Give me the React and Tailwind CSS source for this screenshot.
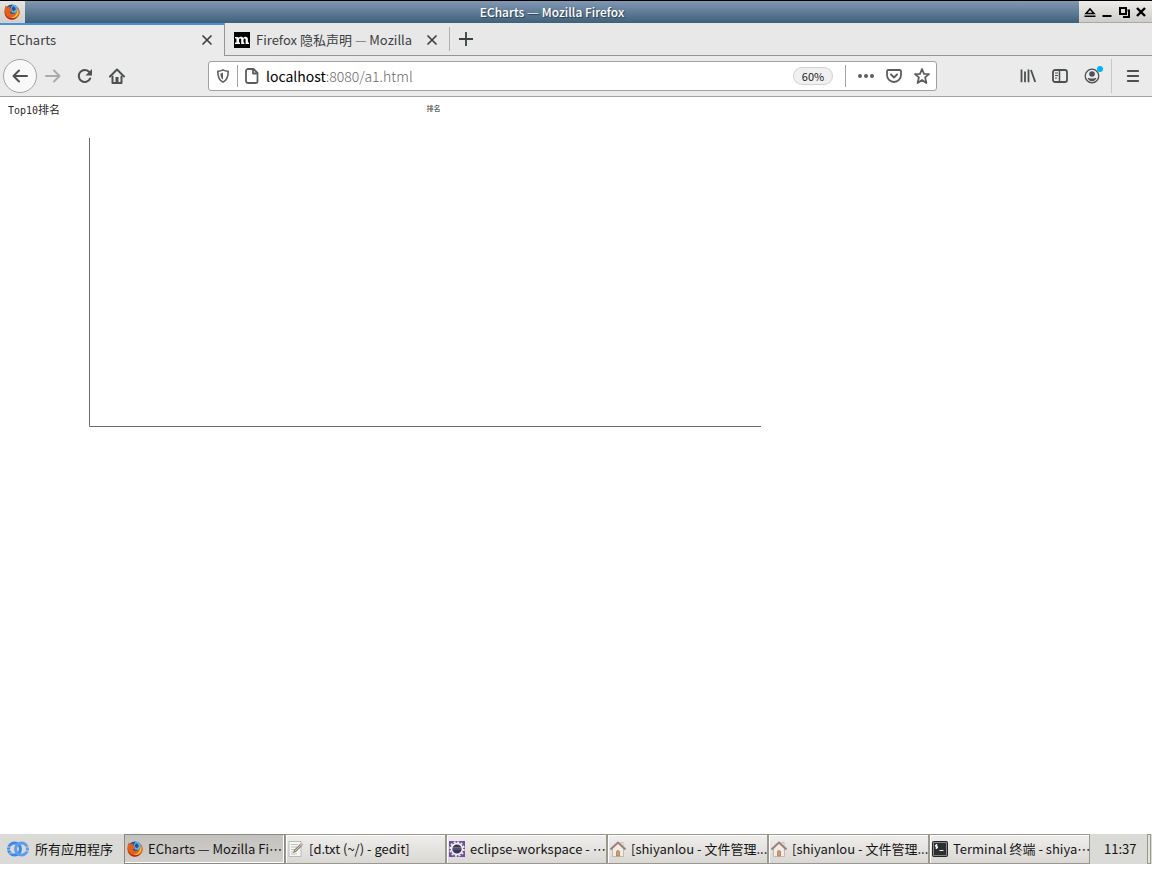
import React from "react";

function FirefoxLogo() {
  return (
    <svg width="16" height="16" viewBox="0 0 16 16" className="shrink-0" aria-hidden="true">
      <circle cx="8" cy="8" r="7.4" fill="#28558f" />
      <path d="M8.500 .8c3.800.2 6 2.600 6 5.700L12 9l-4-.5-2-3z" fill="#5fb4e6" />
      <path d="M9 2.200c1.800.4 2.900 1.800 2.700 3.600L9.600 7.200 7.500 5z" fill="#264f91" />
      <path d="M1.800 1.200 3.300 3.400c1-.6 2-.7 3-.3L5.800 5l2.400 1-.6 1.500-1.900.8c.4 1.700 3.100 2 5 1.100 2.100-1 3-3.100 2.500-6C15 4.500 16 6.700 15.700 9c-.5 3.800-3.700 6.700-7.700 6.700S.8 12.700.4 9C.1 6.200.8 3.300 1.800 1.200z" fill="#e4601b" />
      <path d="M13.600 4.200c1.500 2.300 1.300 5.600-.6 7.700-1.500 1.700-3.900 2.400-6.200 1.800 3.500-.5 6.900-3.400 6.800-9.500z" fill="#f8c440" />
      <path d="M1 8c.6 3.700 3.100 6 7 6.300 2.300.1 4-.6 5.200-1.700-1 1.900-2.900 3-5.200 3C4.100 15.600.8 12.500 1 8z" fill="#b5231c" />
    </svg>
  );
}

function Glyph({ children, size = 16, className = "" }) {
  return (
    <svg width={size} height={size} viewBox="0 0 16 16" fill="none" stroke="currentColor" strokeWidth="2" strokeLinecap="round" strokeLinejoin="round" className={`shrink-0 ${className}`} aria-hidden="true">
      {children}
    </svg>
  );
}

function CloseIcon() {
  return <Glyph><path d="M4 4l8 8M12 4l-8 8" strokeWidth="1.700" /></Glyph>;
}

function TitleBar() {
  return (
    <header className="flex h-[23px] border-t border-black bg-linear-to-b from-[#8298b3] to-[#3f607a]">
      <div className="flex w-[25px] items-center bg-linear-to-b from-[#e6e4e1] to-[#d0cfcb] pl-1">
        <FirefoxLogo />
      </div>
      <h1 className="flex-1 text-center text-[12px] leading-[21px] font-medium text-white [text-shadow:1px_1px_1px_#2c4254]">
        ECharts <span className="font-['DejaVu_Sans',sans-serif] font-normal text-[#d4dce2]">—</span> Mozilla Firefox
      </h1>
      <div className="flex w-[73px] items-center justify-between border-b border-[#aaa9a4] bg-linear-to-b from-[#eeedeb] to-[#cfcdc8] px-[5px] text-black">
        <button aria-label="Shade">
          <svg width="12" height="12" viewBox="0 0 12 12" fill="none" stroke="currentColor" strokeWidth="1.500"><path d="M2 7.500 6 3l4 4.500zM.5 10.200h11" /></svg>
        </button>
        <button aria-label="Minimize">
          <svg width="12" height="12" viewBox="0 0 12 12" fill="none" stroke="currentColor" strokeWidth="2"><path d="M1.500 10h9" /></svg>
        </button>
        <button aria-label="Maximize">
          <svg width="12" height="12" viewBox="0 0 12 12" fill="none" stroke="currentColor" strokeWidth="2"><path d="M2 2h6v6H2zM11 4v7M5 11h7M9.500 4.500H12" /></svg>
        </button>
        <button aria-label="Close">
          <svg width="12" height="12" viewBox="0 0 12 12" fill="none" stroke="currentColor" strokeWidth="2.400"><path d="M2 2l8 8M10 2l-8 8" /></svg>
        </button>
      </div>
    </header>
  );
}

function TabStrip() {
  return (
    <div className="flex h-[33px] bg-[#e8e8e8] text-[13px] text-[#3b4042]" role="tablist">
      <div className="flex w-[224px] items-center bg-[#ebebeb] px-[9px] shadow-[inset_0_2px_0_#4a90d9]">
        <button role="tab" aria-selected="true" className="flex-1 text-left">ECharts</button>
        <button aria-label="Close tab"><CloseIcon /></button>
      </div>
      <div className="flex flex-1 items-center border-b border-l border-[#959595]">
        <div className="flex h-full w-[224px] items-center px-[9px] pt-px">
          <button role="tab" aria-selected="false" className="flex flex-1 items-center gap-[6px] text-left whitespace-nowrap">
            <svg width="16" height="16" viewBox="0 0 16 16" className="shrink-0" aria-hidden="true">
              <path d="M0 0h16v16H0z" fill="#000" />
              <path d="M1 5h3.500v1.200C5.200 5.200 6 4.800 7 4.800c1.100 0 1.800.5 2.100 1.400.7-1 1.500-1.400 2.500-1.400 1.600 0 2.300 1 2.300 2.600v3h1.100V12h-3.400V7.800c0-.8-.3-1.200-.9-1.200-.8 0-1.200.7-1.200 1.600v2.200h.8V12H7.200V7.800c0-.8-.3-1.200-.9-1.200-.9 0-1.300.7-1.300 1.600v2.200h1V12H1v-1.600h1.400V6.600H1z" fill="#fff" />
            </svg>
            <span>Firefox 隐私声明 <span className="font-light">—</span> Mozilla</span>
          </button>
          <button aria-label="Close tab"><CloseIcon /></button>
        </div>
        <div className="h-6 w-px bg-[#b0b0b0]" />
        <button aria-label="New tab" className="ml-2">
          <Glyph><path d="M8 1v14M1 8h14" strokeWidth="1.800" strokeLinecap="butt" /></Glyph>
        </button>
      </div>
    </div>
  );
}

function ToolbarButton({ label, children, className = "w-8" }) {
  return <button aria-label={label} className={`relative flex h-8 items-center justify-center ${className}`}>{children}</button>;
}

function NavBar() {
  return (
    <nav className="flex h-[41px] items-center border-b border-[#a3a3a3] bg-[#ebebeb] pl-[3px] text-[#4c5052]">
      <button aria-label="Back" className="flex size-[34px] items-center justify-center rounded-full border border-[#a3a3a3] bg-[#f8f8f8]">
        <Glyph><path d="M15 8H1.500M7 2.500 1.500 8 7 13.500" /></Glyph>
      </button>
      <ToolbarButton label="Forward"><Glyph className="text-[#a9abac]"><path d="M1 8h13.500M9 2.500 14.500 8 9 13.500" /></Glyph></ToolbarButton>
      <ToolbarButton label="Reload">
        <Glyph><path d="M13.200 10.500A6 6 0 1 1 12.500 4.200" /><path d="M15 1v6.500H8.500z" fill="currentColor" stroke="none" /></Glyph>
      </ToolbarButton>
      <ToolbarButton label="Home">
        <Glyph><path d="M1 8.500 8 1.500l7 7" /><path d="M3.500 8.500V15h9V8.500" /><path d="M6.500 9h3v5.500h-3z" fill="currentColor" stroke="none" /></Glyph>
      </ToolbarButton>
      <div className="ml-[75px] flex h-[30px] flex-1 items-center rounded-[3px] border border-[#a0a0a0] bg-white text-[#5d5d5d]">
        <button aria-label="Tracking protection" className="flex w-7 justify-center">
          <Glyph size={14}><path d="M2 2.500c2.500 0 4.500-.5 6-1.500 1.500 1 3.500 1.500 6 1.500 0 6-1 10-6 12.500C3 12.500 2 8.500 2 2.500z" strokeWidth="1.800" /><path d="M8 4v8C5.800 10.500 5 8 5 5c1 0 2-.3 3-1z" fill="currentColor" stroke="none" /></Glyph>
        </button>
        <div className="h-[22px] w-px bg-[#a5a5a5]" />
        <button aria-label="Site information" className="flex w-7 justify-center">
          <Glyph><path d="M3.500 1h6l4 4v8.500A1.500 1.500 0 0 1 12 15H4a2 2 0 0 1-2-2V3a2 2 0 0 1 1.500-2zM9 1v4.500h4.500" strokeWidth="1.800" /></Glyph>
        </button>
        <div className="relative flex h-full min-w-0 flex-1 items-center text-[14px]">
          <input aria-label="Address" defaultValue="localhost:8080/a1.html" className="h-full w-full bg-transparent text-transparent caret-black outline-none" />
          <span aria-hidden="true" className="pointer-events-none absolute left-0 font-light text-[#666]"><span className="font-normal text-black">localhost</span>:8080/a1.html</span>
        </div>
        <button className="h-[18px] w-10 rounded-full border border-[#d2d2d2] bg-[#f0f0f0] text-[11px] leading-4 text-[#222]">60%</button>
        <div className="mr-[6px] ml-3 h-[22px] w-px bg-[#a5a5a5]" />
        <button aria-label="Page actions" className="flex w-7 justify-center"><Glyph><path d="M2 8h.01M8 8h.01M14 8h.01" strokeWidth="4" /></Glyph></button>
        <button aria-label="Save to Pocket" className="flex w-7 justify-center"><Glyph><path d="M2.500 2h11a1.500 1.500 0 0 1 1.500 1.500V7A7 7 0 0 1 1 7V3.500A1.500 1.500 0 0 1 2.500 2zM5 6.500l3 3 3-3" strokeWidth="1.800" /></Glyph></button>
        <button aria-label="Bookmark" className="flex w-7 justify-center"><Glyph><path d="m8 1 2 4.800 5 .3-3.900 3.300L12.400 15 8 12l-4.400 3 1.300-5.600L1 6.100l5-.3z" strokeWidth="1.800" /></Glyph></button>
      </div>
      <div className="ml-[75px] flex">
        <ToolbarButton label="Library">
          <Glyph><path d="M1.500 1.500v12.800M5 3.500v10.800M8.500 1.500v12.800M11 2l4.200 12" strokeWidth="1.800" strokeLinecap="butt" /></Glyph>
        </ToolbarButton>
        <ToolbarButton label="Sidebars">
          <Glyph><rect x="1" y="2" width="14" height="12" rx="2" strokeWidth="1.800" /><path d="M7.500 2v12" strokeWidth="1.500" /><path d="M3 5h3M3 7.500h3M3 10h2" strokeWidth="1" strokeLinecap="butt" /></Glyph>
        </ToolbarButton>
        <ToolbarButton label="Account">
          <Glyph><circle cx="8" cy="8" r="6.800" strokeWidth="1.300" /><circle cx="8" cy="6" r="2.800" fill="currentColor" stroke="none" /><path d="M3.500 10c1.500 0 2.500.5 4.500.5s3-.5 4.500-.5c-.8 2-2.300 3.200-4.500 3.200S4.300 12 3.500 10z" fill="currentColor" stroke="none" /></Glyph>
          <span className="absolute top-[6px] right-[5px] size-[6px] rounded-full bg-[#00b3f4]" />
        </ToolbarButton>
      </div>
      <div className="ml-[3px] h-[34px] w-px bg-[#c8c8c8]" />
      <ToolbarButton label="Open menu" className="w-10 pl-px"><Glyph><path d="M2.800 3h10.400M2.800 8h10.400M2.800 13h10.400" strokeWidth="1.900" /></Glyph></ToolbarButton>
    </nav>
  );
}

function Chart() {
  return (
    <section className="w-full max-w-[845px] pt-1 pl-[5px] text-[#2b2b2b]">
      <div className="grid grid-cols-[1fr_auto_1fr] items-start">
        <h2 className="pl-[3px] text-[11px] leading-4">
          <span className="font-['DejaVu_Sans_Mono',monospace] text-[10px]">Top10</span>排名
        </h2>
        <p className="pt-px pl-[17px] text-[7px] leading-3">排名</p>
        <span />
      </div>
      <svg viewBox="0 0 840 344" className="block w-full" role="img" aria-label="Top10排名">
        <path d="M84.500 19v288.500H756" fill="none" stroke="#6b6b6b" strokeWidth="1" />
      </svg>
    </section>
  );
}

function GeditIcon() {
  return (
    <svg width="16" height="16" viewBox="0 0 16 16" className="shrink-0" aria-hidden="true">
      <path d="M1 .5h12v15H1z" fill="#f7f7f5" stroke="#b9b9b6" />
      <path d="M3 3.500h7M3 6h6M3 8.500h5M3 11h4M3 13h6" stroke="#bdbdbd" />
      <path d="m5 12 1-3 6-6 2 2-6 6z" fill="#858578" />
      <path d="m12 3 1.500-1.500 2 2L14 5z" fill="#d8a9c9" />
      <path d="m7 10 5.500-5.500" stroke="#d6d48c" />
    </svg>
  );
}

function EclipseIcon() {
  return (
    <svg width="16" height="16" viewBox="0 0 16 16" className="shrink-0" aria-hidden="true">
      <path d="M0 0h16v16H0z" fill="#6b4fa0" />
      <circle cx="8" cy="8" r="6.900" fill="none" stroke="#ece9e2" strokeWidth="1.800" strokeDasharray="2.100 1.512" />
      <circle cx="8" cy="8" r="5.400" fill="#39345c" stroke="#f3f1eb" strokeWidth="1.600" />
      <path d="M4 6.500h8M3.500 8h9" stroke="#7f7aa0" strokeWidth=".8" />
    </svg>
  );
}

function HouseIcon() {
  return (
    <svg width="16" height="16" viewBox="0 0 16 16" className="shrink-0" aria-hidden="true">
      <path d="M10.500 1.500H13V6h-2.500z" fill="#eeece6" stroke="#b5b0a8" strokeWidth=".7" />
      <path d="M2.500 7 8 2l5.500 5v8.500h-11z" fill="#f1ece3" stroke="#b7aea4" strokeWidth=".8" />
      <path d="M.5 8.500 8 1.500l7.500 7" fill="none" stroke="#a17d7c" strokeWidth="2" />
      <path d="M6.500 15v-4a1.500 1.500 0 0 1 3 0v4z" fill="#d29c70" stroke="#9b785b" strokeWidth=".7" />
    </svg>
  );
}

function TerminalIcon() {
  return (
    <svg width="16" height="16" viewBox="0 0 16 16" className="shrink-0" aria-hidden="true">
      <rect x=".5" y=".5" width="15" height="15" rx="1" fill="#2c2f30" stroke="#25282a" />
      <path d="M1.500 1.500h13v13h-13z" fill="none" stroke="#858988" />
      <path d="M5.500 4H3.500v1.500h2V7h-2M4.500 3v5M7.500 9.500h4" fill="none" stroke="#f2f2f2" />
    </svg>
  );
}

const tasks = [
  { id: 1, label: "ECharts — Mozilla Fi", more: true, icon: FirefoxLogo, active: true },
  { id: 2, label: "[d.txt (~/) - gedit]", icon: GeditIcon },
  { id: 3, label: "eclipse-workspace - ", more: true, icon: EclipseIcon },
  { id: 4, label: "[shiyanlou - 文件管理...", icon: HouseIcon },
  { id: 5, label: "[shiyanlou - 文件管理...", icon: HouseIcon },
  { id: 6, label: "Terminal 终端 - shiya", more: true, icon: TerminalIcon },
];

function TaskBar() {
  return (
    <footer className="flex h-[30px] bg-[#dadad6] text-[13px] text-[#151515]">
      <button className="flex w-[124px] items-center gap-[6px] pl-[7px] whitespace-nowrap">
        <svg width="22" height="16" viewBox="0 0 22 16" fill="none" className="shrink-0" aria-hidden="true">
          <circle cx="7.500" cy="8" r="6" stroke="#3d86ec" strokeWidth="3" />
          <circle cx="14.500" cy="8" r="6" stroke="#5d9df0" strokeWidth="3" />
          <path d="M0 6h4M0 9h5M2 12h5M17 6h5M17 10h5" stroke="#dadad6" strokeWidth=".8" />
        </svg>
        所有应用程序
      </button>
      <div className="flex min-w-0 flex-1">
        {tasks.map(({ id, label, more, icon: Icon, active }) => (
          <button key={id} className={`flex min-w-0 flex-1 items-center gap-[5px] border pl-[2px] whitespace-nowrap ${active ? "border-[#8b8982] bg-linear-to-b from-[#c3c2be] to-[#d2d0cd] shadow-[inset_-1px_-1px_0_#fff]" : "border-[#9a978d] bg-linear-to-b from-[#efeeec] to-[#dad8d4] shadow-[inset_1px_1px_0_#fff]"}`}>
            <Icon />
            <span className="whitespace-pre">{label}{more && <span className="font-['DejaVu_Sans',sans-serif]">⋯</span>}</span>
          </button>
        ))}
      </div>
      <time className="w-[57px] pl-[14px] leading-[29px]">11:37</time>
      <div className="w-1 border border-[#9a978d] bg-[#e4e3e0]" />
      <div className="w-px" />
    </footer>
  );
}

export default function App() {
  return (
    <div className="flex min-h-screen flex-col bg-white pb-8 font-['Noto_Sans_CJK_SC',sans-serif]">
      <TitleBar />
      <TabStrip />
      <NavBar />
      <main className="flex-1"><Chart /></main>
      <TaskBar />
    </div>
  );
}
